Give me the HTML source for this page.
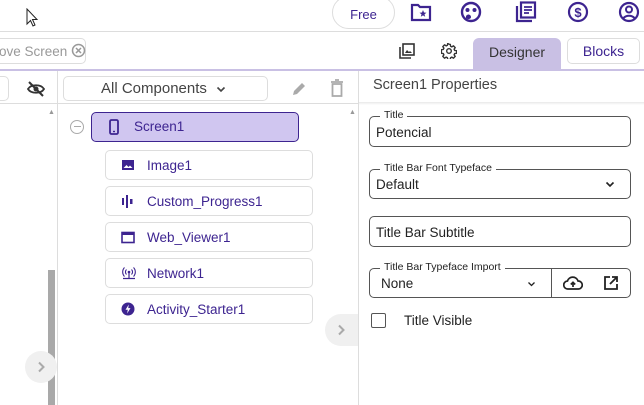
<!DOCTYPE html>
<html><head><style>
*{box-sizing:border-box;margin:0;padding:0}
body{width:644px;height:405px;overflow:hidden;background:#fff;font-family:"Liberation Sans",sans-serif;position:relative;color:#333}
.a{position:absolute}
.item{position:absolute;left:105px;width:208px;height:30px;border:1px solid #ddd;border-radius:5px;background:#fff;font-size:13.5px;color:#3d2490;padding:7px 0 0 41px;white-space:nowrap}
.item svg{position:absolute;left:15px;top:7px}
.fld{position:absolute;left:369px;width:262px;border:1px solid #555;border-radius:5px;font-size:13.5px;color:#222}
.lg{position:absolute;top:-8px;left:10px;background:#fff;padding:0 4px;font-size:10.5px;color:#222}
</style></head><body>
<svg class="a" style="left:26px;top:8px" width="14" height="20" viewBox="0 0 14 20"><path d="M1 1 L1 16 L4.5 12.5 L7 18 L9 17 L6.5 11.5 L11 11.5 Z" fill="#fff" stroke="#222" stroke-width="1"/></svg>
<div class="a" style="left:332px;top:-4px;width:63px;height:33px;border:1px solid #ddd;border-radius:17px;font-size:13px;color:#3d2490;text-align:center;line-height:31px;padding-top:2px">Free</div>
<svg class="a" style="left:410px;top:2px" width="22" height="20" viewBox="0 0 22 20"><path d="M2 3h6l2 2h10v13H2z" fill="none" stroke="#3d2490" stroke-width="2.2"/><path d="M13 8l1 2.5 2.5.2-2 1.6.7 2.5-2.2-1.4-2.2 1.4.7-2.5-2-1.6 2.5-.2z" fill="#3d2490"/></svg>
<svg class="a" style="left:460px;top:1px" width="22" height="22" viewBox="0 0 22 22"><circle cx="11" cy="11" r="9" fill="none" stroke="#3d2490" stroke-width="2.4"/><circle cx="7.5" cy="9" r="2" fill="#3d2490"/><circle cx="14.5" cy="9" r="2" fill="#3d2490"/><path d="M6 15c2-3 5-1 5 1s-3 3-5 1z" fill="#3d2490"/></svg>
<svg class="a" style="left:515px;top:1px" width="22" height="22" viewBox="0 0 22 22"><path d="M2 5v15h15" fill="none" stroke="#3d2490" stroke-width="2.2"/><rect x="6" y="1.5" width="14" height="15" fill="none" stroke="#3d2490" stroke-width="2.2"/><path d="M9 6h8M9 9h8M9 12h5" stroke="#3d2490" stroke-width="1.8"/></svg>
<svg class="a" style="left:567px;top:1px" width="22" height="22" viewBox="0 0 22 22"><circle cx="11" cy="11" r="9" fill="none" stroke="#3d2490" stroke-width="2.2"/><text x="11" y="16" font-size="13" font-weight="bold" text-anchor="middle" fill="#3d2490" font-family="Liberation Sans">$</text></svg>
<svg class="a" style="left:618px;top:1px" width="22" height="22" viewBox="0 0 22 22"><circle cx="11" cy="11" r="9" fill="none" stroke="#3d2490" stroke-width="2.2"/><circle cx="11" cy="8.5" r="3" fill="none" stroke="#3d2490" stroke-width="2"/><path d="M5.5 17c3-3 8-3 11 0" fill="none" stroke="#3d2490" stroke-width="2"/></svg>
<div class="a" style="left:0;top:31px;width:644px;height:1px;background:#ddd"></div>
<div class="a" style="left:-10px;top:38px;width:96px;height:26px;border:1px solid #ddd;border-radius:5px;font-size:13.5px;color:#999;padding:5px 0 0 8px;white-space:nowrap;overflow:hidden">ove Screen</div>
<svg class="a" style="left:71px;top:43px" width="15" height="15" viewBox="0 0 15 15"><circle cx="7.5" cy="7.5" r="6" fill="none" stroke="#999" stroke-width="1.5"/><path d="M5 5l5 5M10 5l-5 5" stroke="#999" stroke-width="1.5"/></svg>
<svg class="a" style="left:398px;top:42px" width="18" height="18" viewBox="0 0 18 18"><path d="M2 5v11h11" fill="none" stroke="#333" stroke-width="1.6"/><rect x="5" y="2" width="11" height="11" fill="none" stroke="#333" stroke-width="1.6"/><path d="M7 11l2-3 2 2 1-1 2 2z" fill="#333"/></svg>
<svg class="a" style="left:441px;top:43px" width="16" height="16" viewBox="0 0 16 16"><path d="M8 1.2l1.3.2.3 1.9 1.2.6 1.6-1.1 1.8 1.8-1.1 1.6.6 1.2 1.9.3v2.6l-1.9.3-.6 1.2 1.1 1.6-1.8 1.8-1.6-1.1-1.2.6-.3 1.9H6.7l-.3-1.9-1.2-.6-1.6 1.1-1.8-1.8 1.1-1.6-.6-1.2-1.9-.3V6.7l1.9-.3.6-1.2-1.1-1.6 1.8-1.8 1.6 1.1 1.2-.6.3-1.9z" fill="none" stroke="#333" stroke-width="1.4" stroke-linejoin="round"/><circle cx="8" cy="8" r="2.3" fill="none" stroke="#333" stroke-width="1.4"/></svg>
<div class="a" style="left:473px;top:38px;width:88px;height:33px;background:#c9c0e4;border-radius:6px 6px 0 0;font-size:14px;color:#333;text-align:center;padding-top:6px">Designer</div>
<div class="a" style="left:567px;top:38px;width:73px;height:26px;border:1px solid #ddd;border-radius:5px;font-size:14px;color:#3d2490;text-align:center;padding-top:4px">Blocks</div>
<div class="a" style="left:0;top:69px;width:644px;height:2px;background:#c9c0e4"></div>
<div class="a" style="left:-5px;top:76px;width:14px;height:25px;border:1px solid #ddd;border-radius:5px"></div>
<svg class="a" style="left:26px;top:80px" width="20" height="18" viewBox="0 0 20 18"><path d="M2 9c3-5 13-5 16 0c-3 5-13 5-16 0z" fill="none" stroke="#333" stroke-width="1.8"/><circle cx="10" cy="9" r="2.5" fill="#333"/><path d="M3 2l14 14" stroke="#333" stroke-width="2"/></svg>
<div class="a" style="left:57px;top:71px;width:1px;height:334px;background:#ddd"></div>
<div class="a" style="left:63px;top:76px;width:205px;height:25px;border:1px solid #ddd;border-radius:5px;font-size:15px;color:#444;padding:3px 0 0 37px">All Components</div>
<svg class="a" style="left:216px;top:86px" width="10" height="7" viewBox="0 0 10 7"><path d="M1.5 1.5l3.5 3.5 3.5-3.5" fill="none" stroke="#444" stroke-width="1.6"/></svg>
<svg class="a" style="left:290px;top:80px" width="18" height="18" viewBox="0 0 18 18"><path d="M3 15l1-4 8-8 3 3-8 8z" fill="#aaa"/></svg>
<svg class="a" style="left:329px;top:79px" width="16" height="19" viewBox="0 0 16 19"><path d="M2 3h12M6 1h4" stroke="#aaa" stroke-width="1.8"/><path d="M3.5 5h9v12h-9z" fill="none" stroke="#aaa" stroke-width="1.8"/></svg>
<div class="a" style="left:358px;top:71px;width:1px;height:334px;background:#ddd"></div>
<div class="a" style="left:373px;top:77px;font-size:14.5px;color:#444">Screen1 Properties</div>
<div class="a" style="left:0;top:103px;width:358px;height:1px;background:#ddd"></div>
<div class="a" style="left:359px;top:102px;width:285px;height:3px;background:linear-gradient(#e8e8e8,#fff)"></div>
<div class="a" style="left:48px;top:109px;font-size:7px;color:#999">▲</div>
<div class="a" style="left:48px;top:270px;width:7px;height:135px;background:#a9a9a9"></div>
<div class="a" style="left:25px;top:351px;width:32px;height:32px;border-radius:16px;background:#f0f0f0"></div>
<svg class="a" style="left:37px;top:361px" width="8" height="12" viewBox="0 0 8 12"><path d="M2 1.5l4.5 4.5L2 10.5" fill="none" stroke="#aaa" stroke-width="2"/></svg>
<div class="a" style="left:349px;top:109px;font-size:7px;color:#999">▲</div>
<div class="a" style="left:325px;top:314px;width:33px;height:32px;border-radius:16px 0 0 16px;background:#f0f0f0"></div>
<svg class="a" style="left:337px;top:324px" width="8" height="12" viewBox="0 0 8 12"><path d="M2 1.5l4.5 4.5L2 10.5" fill="none" stroke="#aaa" stroke-width="2"/></svg>
<div class="a" style="left:70px;top:120px;width:14px;height:14px;border:1.5px solid #aaa;border-radius:50%"><div style="margin:4.5px 2.5px;height:1.5px;background:#aaa"></div></div>
<div class="a" style="left:91px;top:112px;width:208px;height:30px;background:#d0c6f0;border:1px solid #3d2490;border-radius:5px;font-size:13.5px;color:#3d2490;padding:6px 0 0 42px">Screen1
<svg style="position:absolute;left:17px;top:6px" width="10" height="16" viewBox="0 0 10 16"><rect x="1" y="1" width="8" height="14" rx="1.5" fill="none" stroke="#3d2490" stroke-width="1.8"/><path d="M4 12.5h2" stroke="#3d2490" stroke-width="1.4"/></svg></div>
<div class="item" style="top:150px"><svg width="14" height="14" viewBox="0 0 14 14"><rect x="1" y="2" width="12" height="10" fill="#3d2490"/><path d="M2.5 10l3-3 2 2 1.5-1.5 2.5 2.5z" fill="#fff"/></svg>Image1</div>
<div class="item" style="top:186px"><svg width="14" height="14" viewBox="0 0 14 14"><rect x="1" y="4" width="2" height="7" fill="#3d2490"/><rect x="5" y="1" width="2" height="13" fill="#3d2490"/><rect x="9" y="5" width="2.5" height="5" fill="#3d2490"/></svg>Custom_Progress1</div>
<div class="item" style="top:222px"><svg width="14" height="14" viewBox="0 0 14 14"><rect x="1" y="2.5" width="12" height="10" fill="none" stroke="#3d2490" stroke-width="1.6"/><rect x="1" y="2.5" width="12" height="2.5" fill="#3d2490"/></svg>Web_Viewer1</div>
<div class="item" style="top:258px"><svg width="16" height="14" viewBox="0 0 16 14"><circle cx="8" cy="6" r="1.3" fill="#3d2490"/><path d="M5.5 3.5a3.5 3.5 0 0 0 0 5M10.5 3.5a3.5 3.5 0 0 1 0 5M3.5 1.5a6.5 6.5 0 0 0 0 9M12.5 1.5a6.5 6.5 0 0 1 0 9" fill="none" stroke="#3d2490" stroke-width="1.1"/><path d="M8 7v5M2 12.5h12" stroke="#3d2490" stroke-width="1.2"/></svg>Network1</div>
<div class="item" style="top:294px"><svg width="14" height="14" viewBox="0 0 14 14"><circle cx="7" cy="7" r="6.5" fill="#3d2490"/><path d="M7.8 2.5L4.5 7.8h2.3l-.7 3.7 3.4-5.4H7.2z" fill="#fff"/></svg>Activity_Starter1</div>
<div class="fld" style="top:116px;height:31px;padding:8px 0 0 6px"><span class="lg">Title</span>Potencial</div>
<div class="fld" style="top:169px;height:30px;padding:7px 0 0 6px"><span class="lg">Title Bar Font Typeface</span>Default
<svg class="a" style="left:235px;top:11px" width="10" height="7" viewBox="0 0 10 7"><path d="M1.5 1.5l3.5 3.5 3.5-3.5" fill="none" stroke="#222" stroke-width="1.6"/></svg></div>
<div class="fld" style="top:216px;height:31px;padding:8px 0 0 6px">Title Bar Subtitle</div>
<div class="fld" style="top:268px;height:30px;padding:7px 0 0 11px"><span class="lg">Title Bar Typeface Import</span>None
<svg class="a" style="left:157px;top:12px" width="9" height="6" viewBox="0 0 9 6"><path d="M1.5 1.5l3 3 3-3" fill="none" stroke="#222" stroke-width="1.3"/></svg>
<div class="a" style="left:181px;top:0;width:1px;height:29px;background:#555"></div>
<svg class="a" style="left:193px;top:7px" width="20" height="15" viewBox="0 0 20 15"><path d="M5 13a4 4 0 0 1-.5-8A5.5 5.5 0 0 1 15 5a3.5 3.5 0 0 1 .5 8z" fill="none" stroke="#222" stroke-width="1.7"/><path d="M10 11V6.5M7.8 8.5L10 6.3l2.2 2.2" fill="none" stroke="#222" stroke-width="1.7"/></svg>
<svg class="a" style="left:233px;top:6px" width="16" height="16" viewBox="0 0 16 16"><path d="M7 2H2v12h12V9" fill="none" stroke="#222" stroke-width="1.8"/><path d="M9 2h5v5M14 2L7 9" fill="none" stroke="#222" stroke-width="1.8"/></svg></div>
<div class="a" style="left:371px;top:313px;width:15px;height:15px;border:1.6px solid #555;border-radius:2px"></div>
<div class="a" style="left:404px;top:313px;font-size:13.5px;color:#222">Title Visible</div>
</body></html>
